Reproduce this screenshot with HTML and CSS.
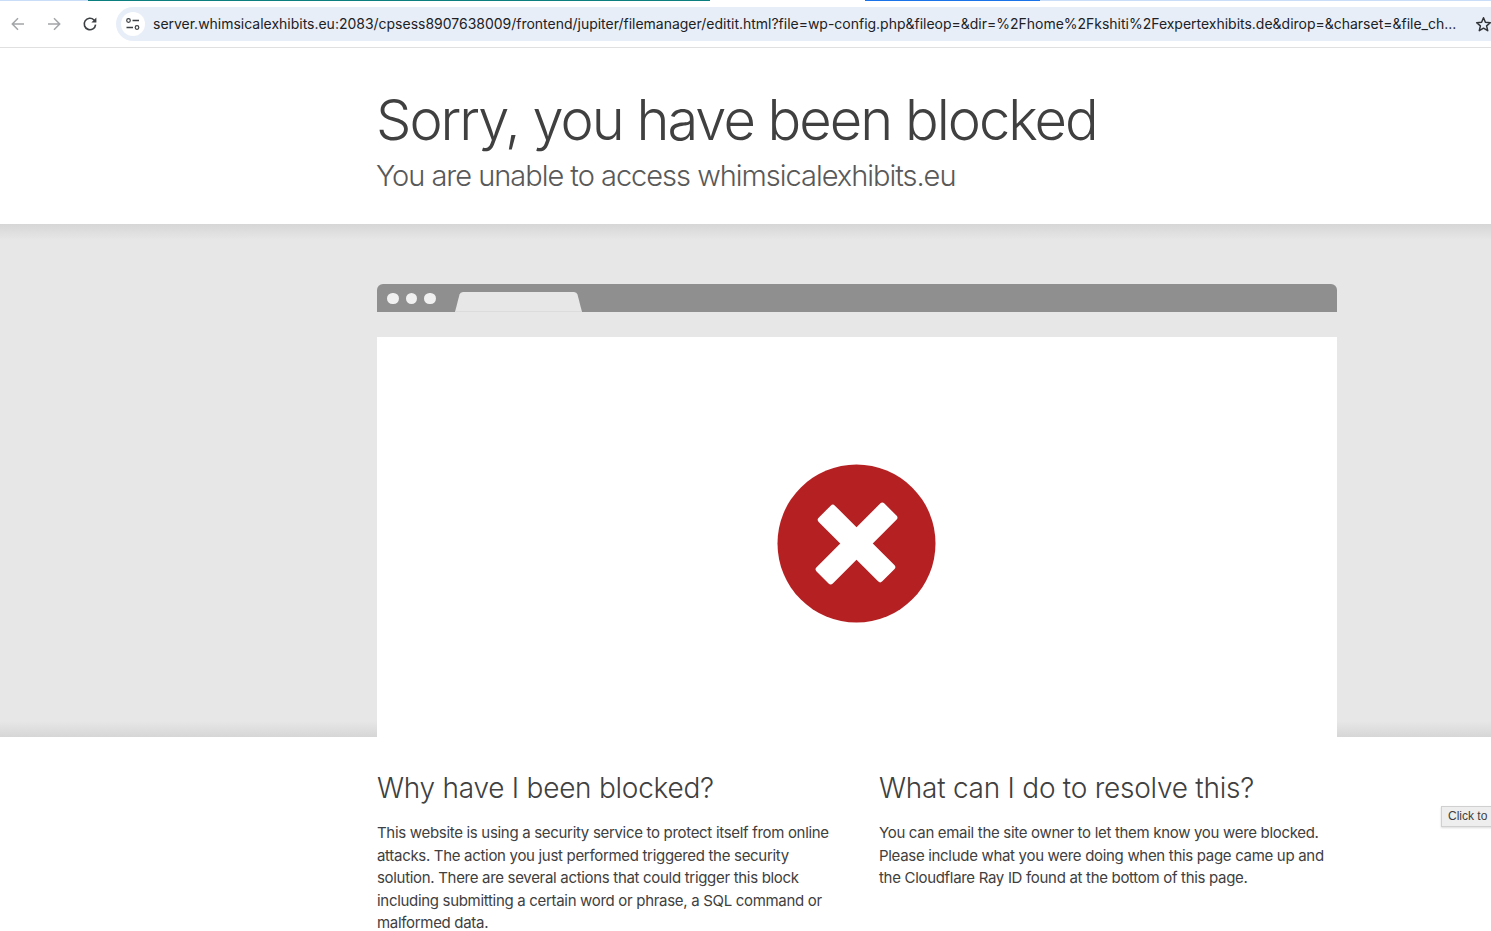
FILE: index.html
```html
<!DOCTYPE html>
<html lang="en">
  <head>
    <meta charset="utf-8" />
    <title>Attention Required!</title>
    <link rel="stylesheet" href="styles.css">
  </head>
  <body>
    <div class="progress">
      <span class="pg-light"></span>
      <span class="pg-teal"></span>
      <span class="pg-gap"></span>
      <span class="pg-blue"></span>
      <span class="pg-rest"></span>
    </div>

    <div class="toolbar">
      <svg class="nav-icon" width="16" height="16" viewBox="0 0 16 16"><path d="M14 8H2.5M8 2.2 2.3 8 8 13.8" fill="none" stroke="#a3a5a8" stroke-width="1.5"/></svg>
      <svg class="nav-icon" width="16" height="16" viewBox="0 0 16 16"><path d="M2 8h11.5M8 2.2 13.7 8 8 13.8" fill="none" stroke="#a3a5a8" stroke-width="1.5"/></svg>
      <svg class="nav-icon" width="16" height="16" viewBox="0 0 16 16"><path d="M13.6 8.6A5.7 5.7 0 1 1 12 4L13.8 5.6" fill="none" stroke="#3c4043" stroke-width="1.6"/><path d="M14.4 1.4v5H9.4z" fill="#3c4043"/></svg>
      <div class="omnibox">
        <span class="site-btn">
          <svg width="16" height="14" viewBox="0 0 16 14"><circle cx="3.5" cy="3.5" r="1.8" fill="none" stroke="#3c4043" stroke-width="1.2"/><path d="M7.5 3.5h6.5M1.5 10.5H8" stroke="#3c4043" stroke-width="1.3"/><circle cx="12" cy="10.5" r="1.8" fill="none" stroke="#3c4043" stroke-width="1.2"/></svg>
        </span>
        <span class="url">server.whimsicalexhibits.eu:2083/cpsess8907638009/frontend/jupiter/filemanager/editit.html?file=wp-config.php&amp;fileop=&amp;dir=%2Fhome%2Fkshiti%2Fexpertexhibits.de&amp;dirop=&amp;charset=&amp;file_ch...</span>
        <svg class="star" width="17" height="17" viewBox="0 0 17 17"><path d="M8.5 1.8 10.4 6.3 15.3 6.7 11.6 9.9 12.7 14.7 8.5 12.2 4.3 14.7 5.4 9.9 1.7 6.7 6.6 6.3z" fill="none" stroke="#303336" stroke-width="1.5" stroke-linejoin="round"/></svg>
      </div>
    </div>

    <header class="head">
      <h1>Sorry, you have been blocked</h1>
      <h2>You are unable to access whimsicalexhibits.eu</h2>
    </header>

    <section class="band">
      <div class="browser">
        <div class="browser-bar">
          <div class="dots"><i></i><i></i><i></i></div>
          <svg class="tab" width="127" height="20" viewBox="0 0 127 20"><path d="M0 20 4.5 2.5Q5.3 0 8 0H119Q121.8 0 122.5 2.5L127 20z" fill="#e7e7e7"/><path d="M0 19.5H127" stroke="#dcdcdc"/></svg>
        </div>
        <div class="browser-body">
          <svg width="159" height="159" viewBox="0 0 159 159">
            <circle cx="79.5" cy="79.5" r="79" fill="#b52023"/>
            <g fill="#fff" transform="rotate(45 79.5 79.5)">
              <rect x="34.5" y="68" width="90" height="23" rx="3"/>
              <rect x="68" y="31.5" width="23" height="96" rx="3"/>
            </g>
          </svg>
        </div>
      </div>
    </section>

    <section class="info">
      <div class="col">
        <h3>Why have I been blocked?</h3>
        <p>This website is using a security service to protect itself from online attacks. The action you just performed triggered the security solution. There are several actions that could trigger this block including submitting a certain word or phrase, a SQL command or malformed data.</p>
      </div>
      <div class="col">
        <h3>What can I do to resolve this?</h3>
        <p>You can email the site owner to let them know you were blocked. Please include what you were doing when this page came up and the Cloudflare Ray ID found at the bottom of this page.</p>
      </div>
    </section>

    <div class="click-tab">Click to</div>
  </body>
</html>
```
FILE: styles.css
```css
* {
  box-sizing: border-box;
}

html, body {
  margin: 0;
  height: 931px;
  overflow: hidden;
}

body {
  position: relative;
  background: #fff;
  color: #404040;
  font-family: Inter, "Liberation Sans", sans-serif;
}

.progress {
  display: flex;
  height: 1px;
}

.pg-light { width: 88px; background: #c9dcf8; }
.pg-teal { width: 622px; background: #0b7f7f; }
.pg-gap { width: 155px; background: #fff; }
.pg-blue { width: 175px; background: #1a73e8; }
.pg-rest { flex: 1; background: #c9dcf8; }

.toolbar {
  display: flex;
  align-items: center;
  height: 47px;
  padding-left: 10px;
  overflow: hidden;
  background: #fff;
  border-bottom: 1px solid #e0e0e0;
}

.nav-icon {
  margin-right: 20px;
  flex: none;
}

.omnibox {
  display: flex;
  align-items: center;
  flex: none;
  width: 1400px;
  height: 34px;
  margin-left: -2px;
  padding-left: 5px;
  background: #e8eef8;
  border-radius: 17px;
}

.site-btn {
  display: flex;
  align-items: center;
  justify-content: center;
  flex: none;
  width: 24px;
  height: 24px;
  background: #fff;
  border-radius: 50%;
}

.url {
  margin: 0 0 2px 8px;
  font-size: 14px;
  letter-spacing: -0.012px;
  color: #202124;
  white-space: nowrap;
}

.star {
  flex: none;
  margin-left: 19px;
}

.head {
  height: 176px;
  padding: 37px 0 0 376px;
  background: #fff;
}

h1 {
  margin: 0;
  font-size: 56px;
  font-weight: 300;
  line-height: 71px;
  letter-spacing: -2px;
  color: #404040;
}

h2 {
  margin: 0;
  font-size: 29px;
  font-weight: 300;
  line-height: 40px;
  letter-spacing: -1.02px;
  color: #595959;
}

.band {
  height: 513px;
  padding: 60px 0 0 377px;
  background: linear-gradient(#d6d6d6, #e7e7e7 16px, #e7e7e7 497px, #d6d6d6);
}

.browser {
  width: 960px;
}

.browser-bar {
  display: flex;
  align-items: flex-end;
  height: 28px;
  background: #8f8f8f;
  border-radius: 6px 6px 0 0;
}

.dots {
  display: flex;
  gap: 7px;
  align-self: center;
  padding: 1px 0 0 10px;
}

.dots i {
  display: block;
  width: 11.5px;
  height: 11.5px;
  background: #f0f0f0;
  border-radius: 50%;
}

.tab {
  display: block;
  margin-left: 19.5px;
}

.browser-body {
  display: flex;
  align-items: center;
  justify-content: center;
  height: 400px;
  margin-top: 25px;
  padding: 12px 2px 0 0;
  background: #fff;
}

.info {
  display: grid;
  grid-template-columns: 458px 458px;
  gap: 44px;
  padding: 31px 0 0 377px;
}

h3 {
  margin: 0 0 14px;
  font-size: 28px;
  font-weight: 300;
  line-height: 40px;
  letter-spacing: -0.25px;
  color: #404040;
}

p {
  margin: 0;
  font-size: 15px;
  line-height: 22.5px;
  letter-spacing: -0.31px;
  color: #404040;
}

.click-tab {
  position: absolute;
  top: 806px;
  left: 1441px;
  width: 60px;
  height: 21px;
  padding-left: 6px;
  font-family: "Liberation Sans", sans-serif;
  font-size: 12px;
  line-height: 19px;
  white-space: nowrap;
  color: #404040;
  background: #eee;
  border: 1px solid #d0d0d0;
  box-shadow: 0 1px 2px rgba(0, 0, 0, 0.15);
}
```
